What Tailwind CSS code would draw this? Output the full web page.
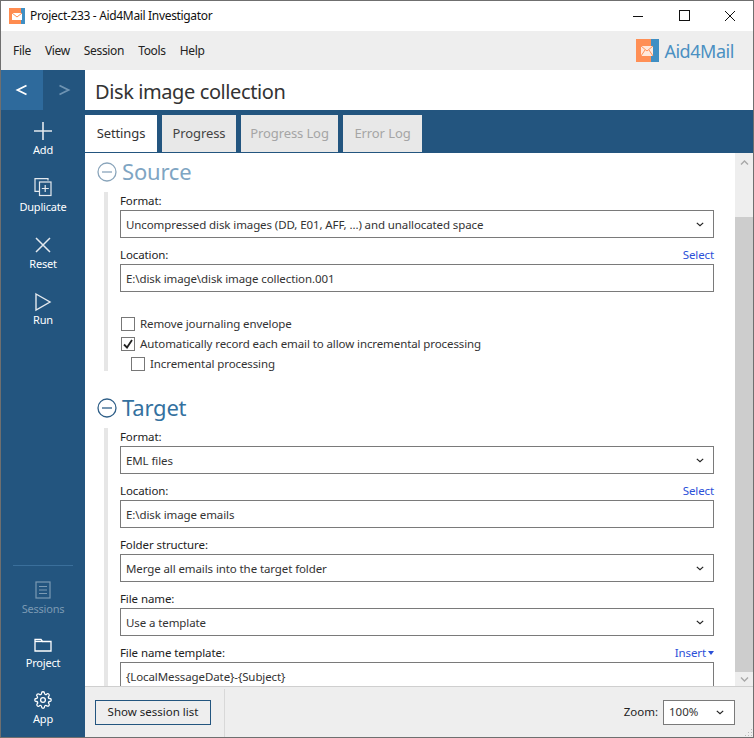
<!doctype html>
<html lang="en">
  <head>
    <meta charset="UTF-8" />
    <title>Project-233 - Aid4Mail Investigator</title>
    <script src="https://cdn.jsdelivr.net/npm/@tailwindcss/browser@4"></script>
  </head>
  <body class="h-[738px] w-[754px] overflow-hidden bg-white font-['Noto_Sans','Open_Sans',sans-serif] text-[12px] text-[#222]">
    <div class="flex h-full flex-col border border-[#6f6f6f]">
      <!-- title bar -->
      <div class="flex h-[30px] shrink-0 items-center bg-white">
        <svg class="ml-[8px] h-[16px] w-[16px]" viewBox="0 0 16 16">
          <rect width="16" height="16" fill="#ff8c50" />
          <rect x="12" width="4" height="16" fill="#3f8fc4" />
          <path d="M3 5h10v7H3z" fill="#fff" />
          <path d="M3 5l5 4 5-4" fill="none" stroke="#ff8c50" />
        </svg>
        <span class="ml-[5px] text-[12px] tracking-[-0.33px] text-[#111]">Project-233 - Aid4Mail Investigator</span>
        <div class="ml-auto flex items-center">
          <svg class="h-[30px] w-[46px]" viewBox="0 0 46 30"><path d="M18 15.500h10" stroke="#111" /></svg>
          <svg class="h-[30px] w-[46px]" viewBox="0 0 46 30"><rect x="18.500" y="9.500" width="10" height="10" fill="none" stroke="#111" /></svg>
          <svg class="h-[30px] w-[46px]" viewBox="0 0 46 30"><path d="M18 10l10 10M28 10l-10 10" stroke="#111" /></svg>
        </div>
      </div>

      <!-- menu bar -->
      <div class="flex h-[39px] shrink-0 items-center bg-[#eeeeee] pl-[12px]">
        <div class="flex gap-[14px] tracking-[-0.33px] text-[#222]">
          <span>File</span><span>View</span><span>Session</span><span>Tools</span><span>Help</span>
        </div>
        <div class="ml-auto mr-[19px] flex items-center gap-[5px]">
          <svg class="h-[23px] w-[23px]" viewBox="0 0 23 23">
            <rect width="23" height="23" fill="#ff8f55" />
            <rect x="15" width="8" height="23" fill="#3f8fc4" />
            <path d="M5 7h12v10H5z" fill="#ffe9dc" />
            <path d="M5 7l6 5 6-5M5 17l4-6M17 17l-4-6" fill="none" stroke="#ff8f55" />
          </svg>
          <span class="text-[18px] leading-none tracking-[-0.45px] text-[#4a90c2]">Aid4Mail</span>
        </div>
      </div>

      <div class="flex min-h-0 flex-1">
        <!-- sidebar -->
        <aside class="flex w-[84px] shrink-0 flex-col bg-[#23557f] text-[11px] tracking-[-0.2px] text-white">
          <div class="flex h-[40px] shrink-0">
            <div class="flex w-[42px] items-center justify-center bg-[#2e6a9c]">
              <svg class="h-[14px] w-[14px]" viewBox="0 0 14 14"><path d="M11.500 2.500L2.500 7l9 4.500" fill="none" stroke="#fff" stroke-width="1.800" /></svg>
            </div>
            <div class="flex w-[42px] items-center justify-center">
              <svg class="h-[14px] w-[14px]" viewBox="0 0 14 14"><path d="M2.500 2.500L11.500 7l-9 4.500" fill="none" stroke="#6f94b3" stroke-width="1.800" /></svg>
            </div>
          </div>
          <div class="flex flex-col items-center">
            <div class="flex h-[57px] w-full flex-col items-center pt-[11px]">
              <svg class="h-[20px] w-[20px]" viewBox="0 0 20 20"><path d="M10 1v18M1 10h18" stroke="#e4e9ee" stroke-width="1.600" /></svg>
              <span class="mt-[2px] leading-[14px]">Add</span>
            </div>
            <div class="flex h-[57px] w-full flex-col items-center pt-[10px]">
              <svg class="h-[20px] w-[20px]" viewBox="0 0 20 20" fill="none" stroke="#e4e9ee" stroke-width="1.200">
                <path d="M15 3.500V1.600H2v12.800h4" />
                <rect x="6.500" y="5" width="11.500" height="13.500" />
                <path d="M12.200 8v7M8.800 11.500h7" />
              </svg>
              <span class="mt-[3px] leading-[14px]">Duplicate</span>
            </div>
            <div class="flex h-[57px] w-full flex-col items-center pt-[12px]">
              <svg class="h-[18px] w-[18px]" viewBox="0 0 18 18"><path d="M2 2l14 14M16 2L2 16" stroke="#e4e9ee" stroke-width="1.500" /></svg>
              <span class="mt-[3px] leading-[14px]">Reset</span>
            </div>
            <div class="flex h-[57px] w-full flex-col items-center pt-[11px]">
              <svg class="h-[20px] w-[18px]" viewBox="0 0 18 20"><path d="M2 2l14 8-14 8z" fill="none" stroke="#e4e9ee" stroke-width="1.400" /></svg>
              <span class="mt-[1px] leading-[14px]">Run</span>
            </div>
          </div>
          <div class="mt-auto flex flex-col items-center pb-[5px]">
            <div class="h-px w-[60px] bg-[#3a6f9b]"></div>
            <div class="flex h-[57px] w-full flex-col items-center pt-[15px] text-[#7b9ab3]">
              <svg class="h-[18px] w-[16px]" viewBox="0 0 16 18" fill="none" stroke="#7b9ab3" stroke-width="1.200">
                <rect x="1" y="1" width="14" height="16" />
                <path d="M4 5.500h8M4 9h8M4 12.500h8" />
              </svg>
              <span class="mt-[3px] leading-[14px]">Sessions</span>
            </div>
            <div class="flex h-[55px] w-full flex-col items-center pt-[15px]">
              <svg class="h-[14px] w-[18px]" viewBox="0 0 18 14" fill="none" stroke="#fff" stroke-width="1.300">
                <path d="M1 13V1.500h6l1.500 2H17V13z" />
                <path d="M1 3.500h7.500" />
              </svg>
              <span class="mt-[4px] leading-[14px]">Project</span>
            </div>
            <div class="flex h-[54px] w-full flex-col items-center pt-[13px]">
              <svg class="h-[18px] w-[18px]" viewBox="0 0 24 24" fill="none" stroke="#fff" stroke-width="1.700" stroke-linejoin="round">
                <circle cx="12" cy="12" r="3.200" />
                <path d="M19.400 15a1.650 1.650 0 0 0 .33 1.820l.06.06a2 2 0 1 1-2.830 2.830l-.06-.06a1.650 1.650 0 0 0-2.820 1.170V21a2 2 0 1 1-4 0v-.09a1.650 1.650 0 0 0-2.820-1.170l-.06.06a2 2 0 1 1-2.830-2.830l.06-.06A1.650 1.650 0 0 0 3.260 14H3a2 2 0 1 1 0-4h.09a1.650 1.650 0 0 0 1.170-2.820l-.06-.06a2 2 0 1 1 2.830-2.830l.06.06A1.650 1.650 0 0 0 10 3.260V3a2 2 0 1 1 4 0v.09a1.650 1.650 0 0 0 2.820 1.170l.06-.06a2 2 0 1 1 2.830 2.830l-.06.06A1.650 1.650 0 0 0 20.740 10H21a2 2 0 1 1 0 4h-.09a1.650 1.650 0 0 0-1.510 1z" />
              </svg>
              <span class="mt-[3px] leading-[14px]">App</span>
            </div>
          </div>
        </aside>

        <main class="flex min-w-0 flex-1 flex-col">
          <!-- page title -->
          <div class="flex h-[40px] shrink-0 items-center pl-[10px] pt-[4px] text-[20px] tracking-[-0.4px] text-[#333]">Disk image collection</div>

          <!-- tabs -->
          <div class="flex h-[43px] shrink-0 items-end gap-[5px] bg-[#23557f] pb-px text-[13px] tracking-[-0.1px]">
            <div class="flex h-[37px] w-[72px] items-center justify-center bg-white text-[#333]">Settings</div>
            <div class="flex h-[37px] w-[74px] items-center justify-center bg-[#e8e8e8] text-[#444]">Progress</div>
            <div class="flex h-[37px] w-[97px] items-center justify-center bg-[#e8e8e8] text-[#a5a5a5]">Progress Log</div>
            <div class="flex h-[37px] w-[79px] items-center justify-center bg-[#e8e8e8] text-[#a5a5a5]">Error Log</div>
          </div>

          <div class="flex min-h-0 flex-1">
            <!-- settings form -->
            <div class="min-w-0 flex-1 overflow-hidden pl-[12px] text-[11.500px] tracking-[-0.1px]">
              <div class="mt-[6px] flex h-[26px] items-center gap-[5px]">
                <svg class="h-[20px] w-[20px]" viewBox="0 0 20 20" fill="none" stroke="#8aa5bb" stroke-width="1.300"><circle cx="10" cy="10" r="9" /><path d="M5 10h10" /></svg>
                <span class="pb-[2px] text-[22px] leading-none tracking-[-0.2px] text-[#7fa5c3]">Source</span>
              </div>
              <div class="ml-[7px] mt-[7px] h-[179px] border-l-4 border-[#e6e6e6] pl-[12px] pr-[21px] text-[#333]">
                <label class="flex h-[18px] items-end pb-px leading-[16px] text-[#222]">Format:</label>
                <div class="flex h-[28px] items-center border border-[#7a7a7a] pl-[5px] pr-[9px] pt-px">
                  <span>Uncompressed disk images (DD, E01, AFF, ...) and unallocated space</span>
                  <svg class="ml-auto h-[5px] w-[8px]" viewBox="0 0 10 6"><path d="M1 1l4 3.500L9 1" fill="none" stroke="#222" stroke-width="1.500" /></svg>
                </div>
                <div class="mt-[8px] flex h-[18px] items-end justify-between pb-px leading-[16px] text-[#222]"><span>Location:</span><span class="text-[#2b50d8]">Select</span></div>
                <div class="flex h-[28px] items-center border border-[#7a7a7a] pl-[5px] pt-px">E:\disk image\disk image collection.001</div>
                <div class="mt-[22px] flex flex-col">
                  <div class="flex h-[20px] items-center gap-[5px] pl-[1px]"><span class="h-[14px] w-[14px] border border-[#777]"></span>Remove journaling envelope</div>
                  <div class="flex h-[20px] items-center gap-[5px] pl-[1px]">
                    <span class="flex h-[14px] w-[14px] items-center justify-center border border-[#777]">
                      <svg class="h-[12px] w-[12px]" viewBox="0 0 12 12"><path d="M2 6.500l3 3 5-7.500" fill="none" stroke="#222" stroke-width="1.800" /></svg>
                    </span>
                    Automatically record each email to allow incremental processing
                  </div>
                  <div class="flex h-[20px] items-center gap-[5px] pl-[11px]"><span class="h-[14px] w-[14px] border border-[#777]"></span>Incremental processing</div>
                </div>
              </div>

              <div class="mt-[24px] flex h-[26px] items-center gap-[5px]">
                <svg class="h-[20px] w-[20px]" viewBox="0 0 20 20" fill="none" stroke="#2f5f88" stroke-width="1.300"><circle cx="10" cy="10" r="9" /><path d="M5 10h10" /></svg>
                <span class="pb-[2px] text-[22px] leading-none tracking-[-0.2px] text-[#34719f]">Target</span>
              </div>
              <div class="ml-[7px] mt-[7px] h-[300px] border-l-4 border-[#e6e6e6] pl-[12px] pr-[21px] text-[#333]">
                <label class="flex h-[18px] items-end pb-px leading-[16px] text-[#222]">Format:</label>
                <div class="flex h-[28px] items-center border border-[#7a7a7a] pl-[5px] pr-[9px] pt-px">
                  <span>EML files</span>
                  <svg class="ml-auto h-[5px] w-[8px]" viewBox="0 0 10 6"><path d="M1 1l4 3.500L9 1" fill="none" stroke="#222" stroke-width="1.500" /></svg>
                </div>
                <div class="mt-[8px] flex h-[18px] items-end justify-between pb-px leading-[16px] text-[#222]"><span>Location:</span><span class="text-[#2b50d8]">Select</span></div>
                <div class="flex h-[28px] items-center border border-[#7a7a7a] pl-[5px] pt-px">E:\disk image emails</div>
                <label class="mt-[8px] flex h-[18px] items-end pb-px leading-[16px] text-[#222]">Folder structure:</label>
                <div class="flex h-[28px] items-center border border-[#7a7a7a] pl-[5px] pr-[9px] pt-px">
                  <span>Merge all emails into the target folder</span>
                  <svg class="ml-auto h-[5px] w-[8px]" viewBox="0 0 10 6"><path d="M1 1l4 3.500L9 1" fill="none" stroke="#222" stroke-width="1.500" /></svg>
                </div>
                <label class="mt-[8px] flex h-[18px] items-end pb-px leading-[16px] text-[#222]">File name:</label>
                <div class="flex h-[28px] items-center border border-[#7a7a7a] pl-[5px] pr-[9px] pt-px">
                  <span>Use a template</span>
                  <svg class="ml-auto h-[5px] w-[8px]" viewBox="0 0 10 6"><path d="M1 1l4 3.500L9 1" fill="none" stroke="#222" stroke-width="1.500" /></svg>
                </div>
                <div class="mt-[8px] flex h-[18px] items-end justify-between pb-px leading-[16px] text-[#222]">
                  <span>File name template:</span>
                  <span class="flex items-center gap-[2px] text-[#2b50d8]">Insert
                    <svg class="h-[4px] w-[6px]" viewBox="0 0 6 4"><path d="M0 0h6L3 4z" fill="#2b50d8" /></svg>
                  </span>
                </div>
                <div class="flex h-[28px] items-center border border-[#7a7a7a] pl-[5px] pt-px">{LocalMessageDate}-{Subject}</div>
              </div>
            </div>

            <!-- scrollbar -->
            <div class="flex w-[18px] shrink-0 flex-col bg-[#eeeeee]">
              <div class="flex h-[64px] shrink-0 justify-center pt-[7px]">
                <svg class="h-[5px] w-[9px]" viewBox="0 0 9 5"><path d="M1 4.500l3.500-3.500L8 4.500" fill="none" stroke="#a8a8a8" stroke-width="1.400" /></svg>
              </div>
              <div class="h-[455px] shrink-0 bg-[#cdcdcd]"></div>
              <div class="flex flex-1 justify-center pt-[5px]">
                <svg class="h-[5px] w-[9px]" viewBox="0 0 9 5"><path d="M1 .500l3.500 3.500L8 .500" fill="none" stroke="#a8a8a8" stroke-width="1.400" /></svg>
              </div>
            </div>
          </div>

          <!-- footer -->
          <div class="relative flex h-[51px] shrink-0 items-center border-t border-[#cfcfcf] bg-[#eeeeee] pl-[10px] text-[11.500px]">
            <button class="flex h-[25px] w-[116px] items-center justify-center border border-[#23557f] text-[#222]">Show session list</button>
            <div class="ml-[13px] h-[48px] w-px self-end bg-[#d8d8d8]"></div>
            <span class="ml-auto text-[#222]">Zoom:</span>
            <div class="ml-[5px] mr-[18px] flex h-[25px] w-[72px] items-center border border-[#7a7a7a] bg-white pl-[5px] pr-[10px] text-[#333]">
              <span>100%</span>
              <svg class="ml-auto h-[5px] w-[8px]" viewBox="0 0 10 6"><path d="M1 1l4 3.500L9 1" fill="none" stroke="#222" stroke-width="1.500" /></svg>
            </div>
            <svg class="absolute bottom-0 right-0 h-[10px] w-[10px]" viewBox="0 0 10 10" fill="#b9b9b9">
              <rect x="8" y="8" width="1" height="1" /><rect x="5" y="8" width="1" height="1" /><rect x="2" y="8" width="1" height="1" />
              <rect x="8" y="5" width="1" height="1" /><rect x="5" y="5" width="1" height="1" /><rect x="8" y="2" width="1" height="1" />
            </svg>
          </div>
        </main>
      </div>
    </div>
  </body>
</html>
